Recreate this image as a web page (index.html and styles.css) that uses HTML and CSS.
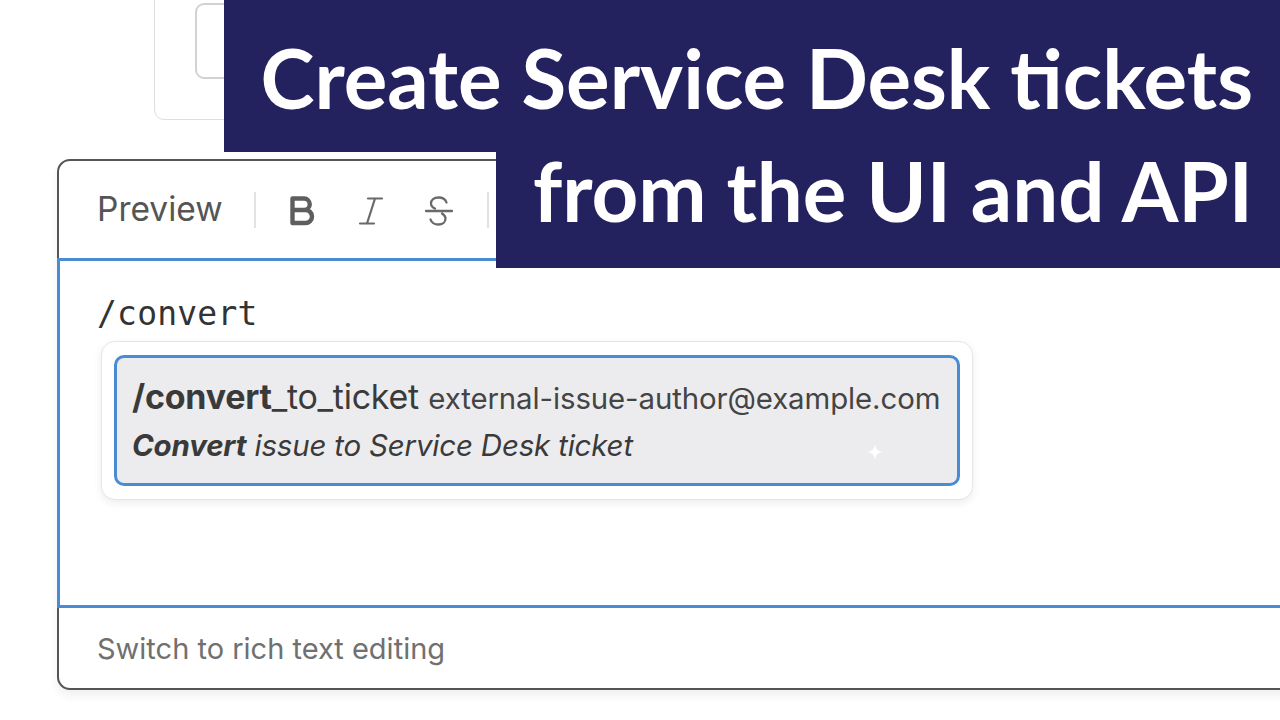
FILE: index.html
```html
<!DOCTYPE html>
<html lang="en">
<head>
<meta charset="utf-8">
<title>Create Service Desk tickets</title>
<link rel="stylesheet" href="styles.css">
</head>
<body>
<div class="page">
  <div class="ghost-card">
    <div class="ghost-input"></div>
  </div>

  <div class="editor">
    <div class="toolbar">
      <span class="tab">Preview</span>
      <span class="sep"></span>
      <svg class="tool tool-b" width="30" height="34" viewBox="0 0 30 34" fill="none" stroke="#5e5e5e" stroke-width="4.4" stroke-linejoin="round"><path d="M4.5 4.5H16a5.75 5.75 0 0 1 0 11.5H4.5Z M4.5 16H17.5a6.5 6.5 0 0 1 0 13H4.5Z"/></svg>
      <svg class="tool tool-i" width="30" height="34" viewBox="0 0 30 34" fill="none" stroke="#6a6a6a" stroke-width="2.2" stroke-linecap="round"><path d="M12 4.5H26 M4 29.5H18 M19 4.5 11 29.5"/></svg>
      <svg class="tool tool-s" width="30" height="34" viewBox="0 0 30 34" fill="none" stroke="#6a6a6a" stroke-width="2.3" stroke-linecap="round"><path d="M22.5 8.5C21.5 5.5 18.5 3.5 14.5 3.5C10 3.5 7 6 7 9.5C7 12 8.5 13.5 11 14.5 M18 19.5C20.5 21 21.5 22.5 21.5 24.5C21.5 28 18.5 30.5 14.5 30.5C10.5 30.5 7.5 28.5 6.5 25.5 M2 17H28"/></svg>
      <span class="sep sep-2"></span>
    </div>

    <div class="textarea">
      <div class="typed">/convert</div>
      <div class="dropdown">
        <div class="item">
          <div class="cmd"><strong>/convert</strong>_to_ticket <span class="param">external-issue-author@example.com</span></div>
          <div class="desc"><strong>Convert</strong> issue to Service Desk ticket</div>
          <svg class="sparkle" width="16" height="16" viewBox="0 0 16 16"><path d="M8 0C8.6 5 11 7.4 16 8 11 8.6 8.6 11 8 16 7.4 11 5 8.6 0 8 5 7.4 7.4 5 8 0z" fill="#ffffff"/></svg>
        </div>
      </div>
    </div>

    <div class="footer">Switch to rich text editing</div>
  </div>
</div>

<div class="banner">
  <div class="line line-1">Create Service Desk tickets</div>
  <div class="line line-2">from the UI and API</div>
</div>
</body>
</html>
```

FILE: styles.css
```css
html, body {
  margin: 0;
  padding: 0;
  background: #ffffff;
}

body {
  width: 1280px;
  height: 720px;
  overflow: hidden;
  position: relative;
  font-family: Inter, "Noto Sans", "Liberation Sans", sans-serif;
}

.page {
  display: flex;
  flex-direction: column;
  align-items: flex-start;
}

.ghost-card {
  margin-top: -40px;
  margin-left: 154px;
  width: 320px;
  height: 160px;
  border: 1px solid #dedede;
  border-radius: 10px;
  box-sizing: border-box;
  padding: 42px 0 0 40px;
}

.ghost-input {
  width: 260px;
  height: 76px;
  border: 2px solid #d2d2d2;
  border-radius: 9px;
  box-sizing: border-box;
}

.editor {
  margin-top: 39px;
  margin-left: 57px;
  width: 1300px;
  height: 531px;
  border: 2px solid #555555;
  border-radius: 13px;
  box-sizing: border-box;
  box-shadow: 0 6px 10px rgba(0, 0, 0, 0.06);
  display: flex;
  flex-direction: column;
  background: #fff;
}

.toolbar {
  height: 97px;
  display: flex;
  align-items: center;
  padding-left: 38px;
  flex-shrink: 0;
}

.tab {
  font-size: 33.5px;
  color: #555555;
  width: 157px;
  margin-top: -2px;
}

.sep {
  width: 2px;
  height: 36px;
  background: #e2e2e2;
  margin-right: 32px;
}

.tool {
  margin-top: 2px;
}

.tool-b {
  margin-right: 38px;
}

.tool-i {
  margin-right: 38px;
}

.tool-s {
  margin-right: 33px;
}

.textarea {
  flex: 1;
  border: 3px solid #4a8bd6;
  border-right: none;
  margin-left: -2px;
  padding: 33px 0 0 37px;
  display: flex;
  flex-direction: column;
  align-items: flex-start;
}

.typed {
  font-family: "DejaVu Sans Mono", "Liberation Mono", monospace;
  font-size: 33px;
  line-height: 40px;
  color: #333333;
  letter-spacing: 0.2px;
}

.dropdown {
  margin-top: 7px;
  margin-left: 4px;
  width: 872px;
  box-sizing: border-box;
  padding: 13px 12px 13px 12px;
  background: #ffffff;
  border: 1px solid #e6e6e6;
  border-radius: 14px;
  box-shadow: 0 3px 8px rgba(0, 0, 0, 0.08);
}

.item {
  position: relative;
  height: 131px;
  box-sizing: border-box;
  border: 3px solid #4a8bd6;
  border-radius: 10px;
  background: #ececef;
  padding: 18px 0 0 15px;
  color: #333333;
  white-space: nowrap;
}

.cmd {
  font-size: 34px;
  line-height: 42px;
  color: #3a3a3a;
  letter-spacing: -0.25px;
}

.cmd strong {
  font-weight: 700;
}

.param {
  font-size: 29.4px;
  color: #444444;
  letter-spacing: -0.1px;
}

.desc {
  font-size: 29.5px;
  line-height: 36px;
  margin-top: 7px;
  font-style: italic;
  color: #3a3a3a;
  letter-spacing: -0.2px;
}

.desc strong {
  font-weight: 700;
}

.sparkle {
  position: absolute;
  left: 750px;
  top: 86px;
}

.footer {
  height: 80px;
  display: flex;
  align-items: center;
  padding-left: 38px;
  font-size: 29px;
  color: #707070;
  flex-shrink: 0;
}

.banner {
  position: absolute;
  top: 0;
  right: 0;
  display: flex;
  flex-direction: column;
  align-items: flex-end;
  font-family: Lato, "Open Sans", sans-serif;
  font-weight: 700;
  color: #ffffff;
}

.line {
  background: #24215f;
  box-sizing: border-box;
  white-space: nowrap;
  padding-right: 27px;
  text-align: right;
  font-size: 81.6px;
}

.line-1 {
  width: 1056px;
  height: 152px;
  line-height: 154px;
}

.line-2 {
  width: 784px;
  height: 116px;
  line-height: 77px;
}
```
